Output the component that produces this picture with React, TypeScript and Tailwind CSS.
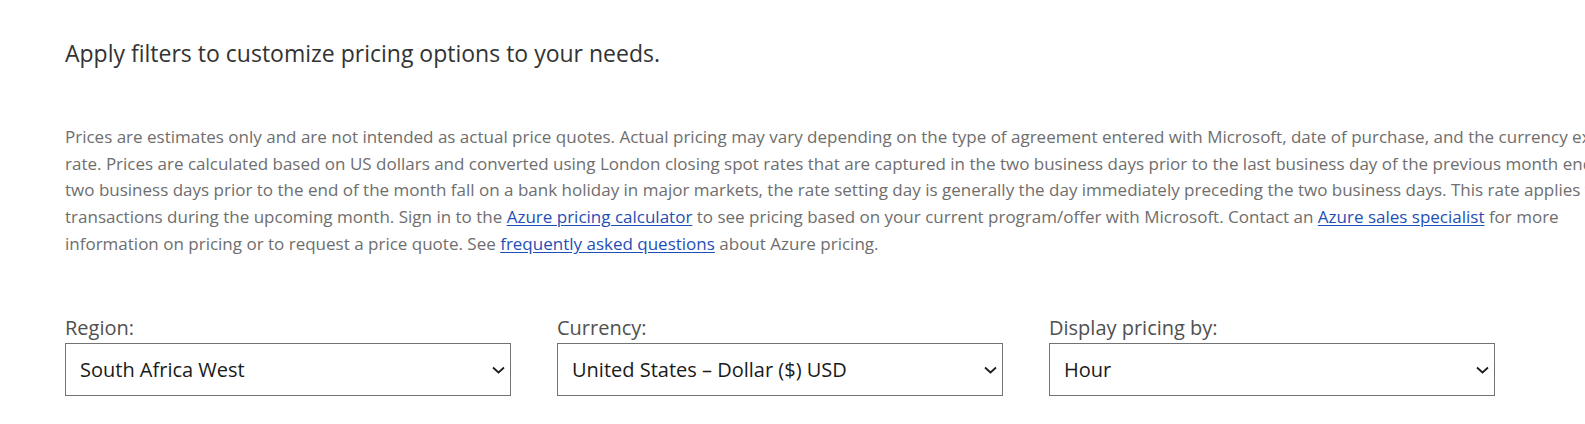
import { ChangeEvent, useState } from "react";

const font = { fontFamily: '"Segoe UI", "Open Sans", "Noto Sans", sans-serif' };

const lines: React.ReactNode[] = [
  "Prices are estimates only and are not intended as actual price quotes. Actual pricing may vary depending on the type of agreement entered with Microsoft, date of purchase, and the currency exchange",
  "rate. Prices are calculated based on US dollars and converted using London closing spot rates that are captured in the two business days prior to the last business day of the previous month end. If the",
  "two business days prior to the end of the month fall on a bank holiday in major markets, the rate setting day is generally the day immediately preceding the two business days. This rate applies to all",
  <>
    transactions during the upcoming month. Sign in to the{" "}
    <a href="#" className="text-[#1f4fb6] underline underline-offset-2">Azure pricing calculator</a> to see pricing based on
    your current program/offer with Microsoft. Contact an{" "}
    <a href="#" className="text-[#1f4fb6] underline underline-offset-2">Azure sales specialist</a> for more
  </>,
  <>
    information on pricing or to request a price quote. See{" "}
    <a href="#" className="text-[#1f4fb6] underline underline-offset-2">frequently asked questions</a> about Azure
    pricing.
  </>,
];

function Chevron() {
  return (
    <svg width="13" height="8" viewBox="0 0 13 8" className="pointer-events-none absolute right-[6px] top-[23px]">
      <polyline points="1,1.5 6.5,6.5 12,1.5" fill="none" stroke="#1a1a1a" strokeWidth="1.7" />
    </svg>
  );
}

function Filter({ label, options, value }: { label: string; options: string[]; value: string }) {
  const [v, setV] = useState(value);
  return (
    <div className="flex flex-col">
      <label className="text-[20px] leading-[24px] text-[#505050]">{label}</label>
      <div className="relative mt-[3px]">
        <select
          value={v}
          onChange={(e: ChangeEvent<HTMLSelectElement>) => setV(e.target.value)}
          className="h-[53px] w-full appearance-none border border-[#737373] bg-white pl-[14px] pr-8 text-[20px] text-[#1a1a1a] outline-none"
          style={font}
        >
          {options.map((o) => (
            <option key={o}>{o}</option>
          ))}
        </select>
        <Chevron />
      </div>
    </div>
  );
}

export default function App() {
  return (
    <div className="w-[1585px] h-[424px] overflow-hidden bg-white pl-[65px]" style={font}>
      <h2 className="pt-[37px] text-[23px] leading-[32px] text-[#333333]">
        Apply filters to customize pricing options to your needs.
      </h2>

      <div className="mt-[55px] text-[17px] leading-[26.67px] text-[#6e6e6e]">
        {lines.map((l, i) => (
          <div key={i} className="whitespace-nowrap">
            {l}
          </div>
        ))}
      </div>

      <div className="mt-[59px] grid w-[1430px] grid-cols-3 gap-[46px]">
        <Filter label="Region:" value="South Africa West" options={["South Africa West", "South Africa North", "West Europe", "East US"]} />
        <Filter
          label="Currency:"
          value="United States – Dollar ($) USD"
          options={["United States – Dollar ($) USD", "Euro (€) EUR", "British Pound (£) GBP"]}
        />
        <Filter label="Display pricing by:" value="Hour" options={["Hour", "Month"]} />
      </div>
    </div>
  );
}
